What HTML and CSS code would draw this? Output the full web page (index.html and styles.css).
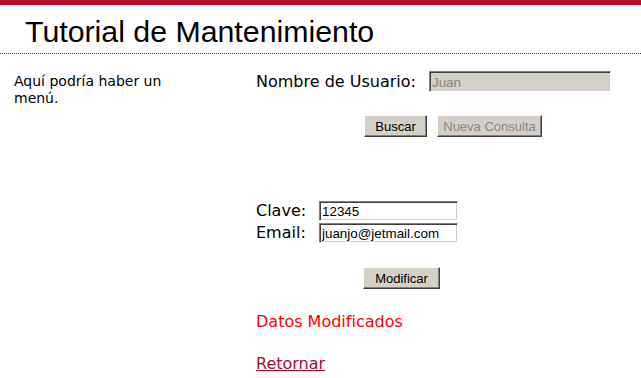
FILE: index.html
```html
<!DOCTYPE html>
<html lang="es">
<head>
<meta charset="utf-8">
<title>Tutorial de Mantenimiento</title>
<link rel="stylesheet" href="styles.css">
</head>
<body>
<header class="header">
  <h1 class="title">Tutorial de Mantenimiento</h1>
</header>
<div class="layout">
  <nav class="menu">Aquí podría haber un menú.</nav>
  <main class="content">
    <div class="search-row">
      <label class="label" for="user">Nombre de Usuario:</label>
      <input id="user" class="field field-disabled user-field" type="text" value="Juan" disabled>
    </div>
    <div class="search-buttons">
      <button class="btn btn-search" type="button">Buscar</button>
      <button class="btn btn-new" type="button" disabled>Nueva Consulta</button>
    </div>
    <div class="edit-grid">
      <label class="label" for="clave">Clave:</label>
      <input id="clave" class="field" type="text" value="12345">
      <label class="label" for="email">Email:</label>
      <input id="email" class="field" type="text" value="juanjo@jetmail.com">
    </div>
    <div class="modify-row">
      <button class="btn btn-modify" type="button">Modificar</button>
    </div>
    <p class="message">Datos Modificados</p>
    <a class="back" href="#">Retornar</a>
  </main>
</div>
</body>
</html>
```

FILE: styles.css
```css
html, body {
  margin: 0;
  padding: 0;
  background: #ffffff;
}

body {
  font-family: "DejaVu Sans", Verdana, sans-serif;
  color: #000000;
  border-top: 5px solid #b5112f;
}

.header {
  border-bottom: 1px dotted #8b1a2b;
}

.title {
  margin: 0;
  padding: 10px 0 4px 25px;
  font-family: "Liberation Sans", Arial, sans-serif;
  font-size: 30.3px;
  font-weight: normal;
  line-height: 34px;
  color: #000000;
}

.layout {
  display: flex;
  align-items: flex-start;
}

.menu {
  box-sizing: border-box;
  width: 256px;
  padding: 19px 80px 0 14px;
  font-size: 14px;
  line-height: 17px;
}

.content {
  display: flex;
  flex-direction: column;
  align-items: flex-start;
  padding-top: 17px;
}

.label {
  font-size: 16px;
  line-height: 20px;
}

.search-row {
  display: flex;
  align-items: center;
  gap: 13px;
}

.field {
  box-sizing: border-box;
  height: 20px;
  margin: 0;
  padding: 1px 2px 0;
  font-family: "Liberation Sans", Arial, sans-serif;
  font-size: 13.4px;
  color: #000000;
  background: #ffffff;
  border: 1px solid;
  border-color: #808080 #ffffff #ffffff #808080;
  box-shadow: inset 1px 1px 0 #404040, inset -1px -1px 0 #d4d0c8;
  outline: none;
}

.field-disabled {
  color: #8a8680;
  background: #d4d0c8;
  box-shadow: inset 1px 1px 0 #404040, inset -1px -1px 0 #d4d0c8;
}

.user-field {
  width: 182px;
  height: 21px;
}

.search-buttons {
  display: flex;
  gap: 10px;
  margin-top: 23px;
  margin-left: 108px;
}

.btn {
  box-sizing: border-box;
  height: 22px;
  margin: 0;
  padding: 0;
  font-family: "Liberation Sans", Arial, sans-serif;
  font-size: 13px;
  color: #000000;
  background: #d4d0c8;
  border: 1px solid;
  border-color: #ffffff #404040 #404040 #ffffff;
  box-shadow: inset -1px -1px 0 #808080;
  border-radius: 0;
}

.btn:disabled {
  color: #8a8680;
}

.btn-search {
  width: 63px;
}

.btn-new {
  width: 105px;
}

.btn-modify {
  width: 77px;
}

.edit-grid {
  display: grid;
  grid-template-columns: 63px 139px;
  row-gap: 2px;
  align-items: center;
  margin-top: 64px;
}

.edit-grid .field {
  width: 139px;
}

.modify-row {
  margin-top: 24px;
  margin-left: 107px;
}

.message {
  margin: 23px 0 0;
  font-size: 16px;
  line-height: 20px;
  color: #ff0000;
}

.back {
  margin-top: 22px;
  font-size: 16px;
  line-height: 20px;
  color: #a0102e;
  text-decoration: underline;
}
```
